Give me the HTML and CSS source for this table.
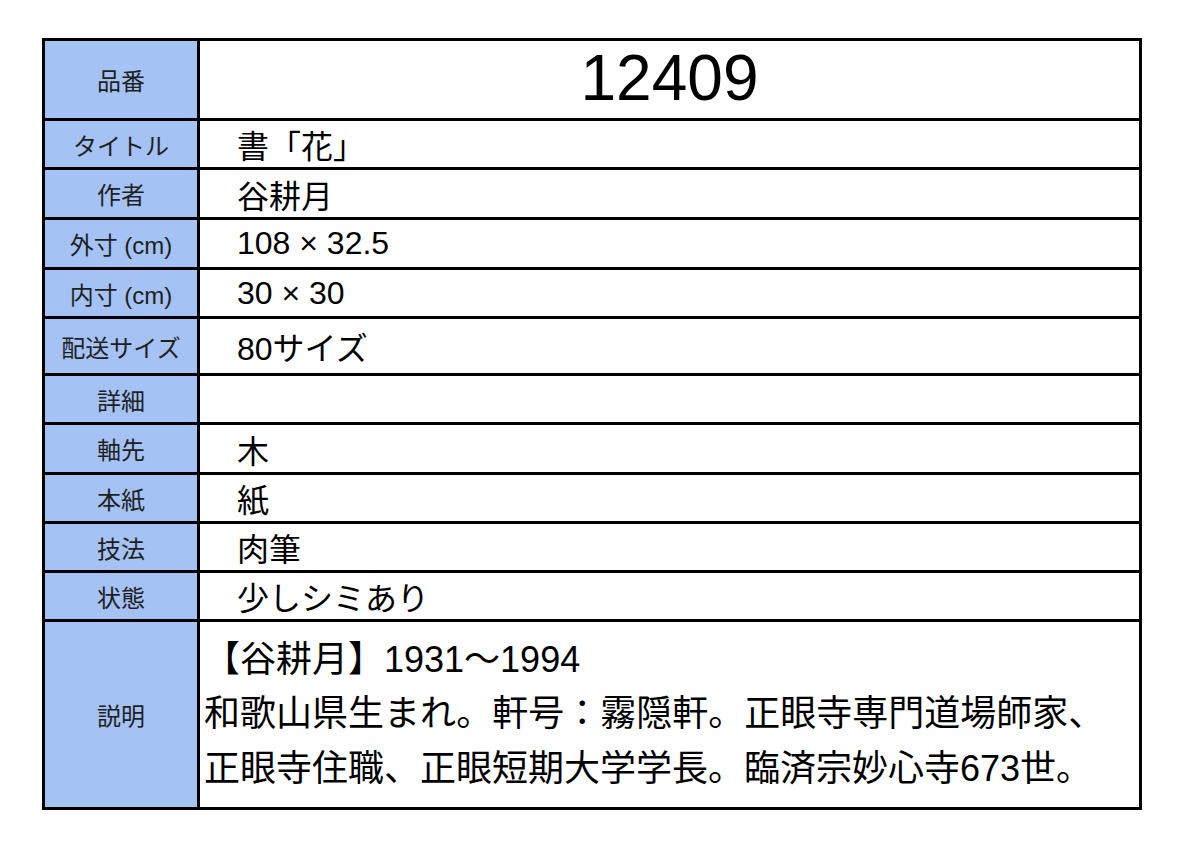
FILE: index.html
```html
<!DOCTYPE html>
<html lang="ja">
<head>
<meta charset="utf-8">
<title>12409</title>
<link rel="stylesheet" href="styles.css">
</head>
<body>
<div class="sheet">
  <div class="label">品番</div>
  <div class="value number">12409</div>

  <div class="label">タイトル</div>
  <div class="value">書「花」</div>

  <div class="label">作者</div>
  <div class="value">谷耕月</div>

  <div class="label">外寸 (cm)</div>
  <div class="value">108 × 32.5</div>

  <div class="label">内寸 (cm)</div>
  <div class="value">30 × 30</div>

  <div class="label">配送サイズ</div>
  <div class="value">80サイズ</div>

  <div class="label">詳細</div>
  <div class="value"></div>

  <div class="label">軸先</div>
  <div class="value">木</div>

  <div class="label">本紙</div>
  <div class="value">紙</div>

  <div class="label">技法</div>
  <div class="value">肉筆</div>

  <div class="label">状態</div>
  <div class="value">少しシミあり</div>

  <div class="label">説明</div>
  <div class="value desc">
    <div class="desc-text">【谷耕月】1931〜1994<br>和歌山県生まれ。軒号：霧隠軒。正眼寺専門道場師家、<br>正眼寺住職、正眼短期大学学長。臨済宗妙心寺673世。</div>
  </div>
</div>
</body>
</html>
```

FILE: styles.css
```css
html, body {
  margin: 0;
  padding: 0;
  background: #ffffff;
}

body {
  padding: 38px 0 0 42px;
  font-family: "Liberation Sans", Arial, "Noto Sans CJK JP", sans-serif;
  color: #000;
}

.sheet {
  display: grid;
  width: 1100px;
  box-sizing: border-box;
  grid-template-columns: 152px 939px;
  grid-template-rows: 77px 46px 47px 47px 46px 54px 46px 47px 46px 46px 46px 185px;
  gap: 3px;
  padding: 3px;
  background: #000;
}

.label {
  background: #a4c2f4;
  display: flex;
  align-items: center;
  justify-content: center;
  font-size: 24px;
  color: #1f1f1f;
  white-space: nowrap;
}

.value {
  background: #ffffff;
  display: flex;
  align-items: center;
  padding-left: 37px;
  font-size: 32px;
  white-space: nowrap;
}

.value.number {
  justify-content: center;
  padding-left: 0;
  padding-bottom: 3px;
  font-size: 64px;
}

.value.desc {
  padding-left: 4px;
  font-size: 36px;
}

.desc-text {
  line-height: 54.5px;
}
```
